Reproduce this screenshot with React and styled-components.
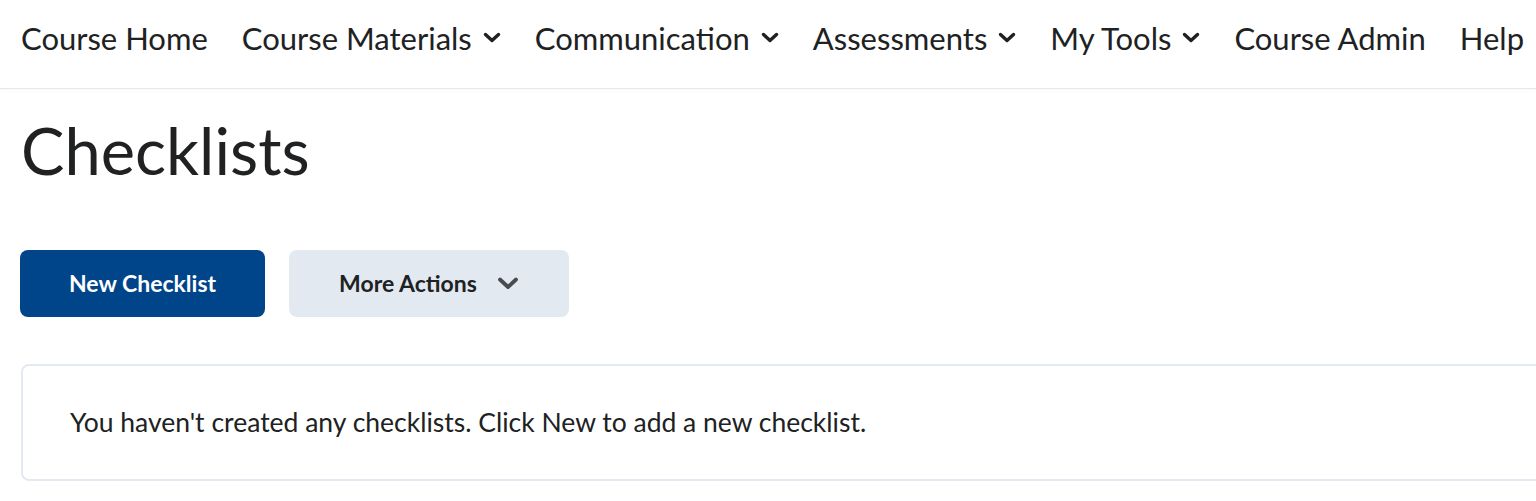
import React from 'react'
import styled, { createGlobalStyle } from 'styled-components'

const GlobalStyle = createGlobalStyle`
  html, body {
    margin: 0;
    padding: 0;
    background: #ffffff;
    overflow: hidden;
  }
  body {
    font-family: Lato, "Noto Sans", sans-serif;
    color: #202122;
  }
`

const navItems = [
  { label: 'Course Home' },
  { label: 'Course Materials', menu: true },
  { label: 'Communication', menu: true },
  { label: 'Assessments', menu: true },
  { label: 'My Tools', menu: true },
  { label: 'Course Admin' },
  { label: 'Help' },
]

// small nav chevron
const NavChevron = () => (
  <svg width="18" height="18" viewBox="0 0 18 18" fill="none">
    <path d="M2.5 5.5 L9 11.5 L15.5 5.5" stroke="#202122" strokeWidth="3.4" strokeLinecap="round" strokeLinejoin="round" />
  </svg>
)

const ButtonChevron = () => (
  <svg width="22" height="22" viewBox="0 0 22 22" fill="none">
    <path d="M3 7.5 L11 15 L19 7.5" stroke="#494c4e" strokeWidth="3.8" strokeLinecap="round" strokeLinejoin="round" />
  </svg>
)

const App = () => {
  return (
    <>
      <GlobalStyle />
      <NavBar>
        {navItems.map(item => (
          <NavItem key={item.label}>
            {item.label}
            {item.menu && <NavChevron />}
          </NavItem>
        ))}
      </NavBar>
      <Main>
        <Title>Checklists</Title>
        <ButtonRow>
          <PrimaryButton>New Checklist</PrimaryButton>
          <SecondaryButton>
            More Actions
            <ButtonChevron />
          </SecondaryButton>
        </ButtonRow>
        <EmptyCard>
          You haven't created any checklists. Click New to add a new checklist.
        </EmptyCard>
      </Main>
    </>
  )
}

const NavBar = styled.nav`
display: flex;
align-items: center;
gap: 34px;
height: 89px;
padding: 0 21px;
box-sizing: border-box;
border-bottom: 1px solid #e8e8e8;
box-shadow: 0 2px 4px rgba(0, 0, 0, 0.025);
`

const NavItem = styled.a`
display: flex;
align-items: center;
gap: 11px;
font-size: 31px;
line-height: 1;
color: #202122;
white-space: nowrap;
padding-bottom: 12px;
`

const Main = styled.main`
display: flex;
flex-direction: column;
padding: 0 0 0 21px;
`

const Title = styled.h1`
margin: 21px 0 0 0;
font-size: 65px;
font-weight: 400;
line-height: 80px;
color: #202122;
`

const ButtonRow = styled.div`
display: flex;
gap: 24px;
margin-top: 60px;
margin-left: -1px;
`

const BaseButton = styled.button`
display: flex;
align-items: center;
justify-content: center;
height: 67px;
border: none;
border-radius: 8px;
font-family: Lato, "Noto Sans", sans-serif;
font-size: 23px;
font-weight: 700;
box-sizing: border-box;
padding: 0 0 2px 0;
`

const PrimaryButton = styled(BaseButton)`
width: 245px;
background: #004489;
color: #ffffff;
`

const SecondaryButton = styled(BaseButton)`
width: 280px;
gap: 20px;
background: #e3e9f1;
color: #202122;
`

const EmptyCard = styled.div`
margin-top: 47px;
margin-right: -40px;
height: 117px;
box-sizing: border-box;
display: flex;
align-items: center;
padding: 0 48px 2px 47px;
border: 2px solid #e3e9f1;
border-radius: 8px;
font-size: 26.5px;
color: #202122;
`

export default App
